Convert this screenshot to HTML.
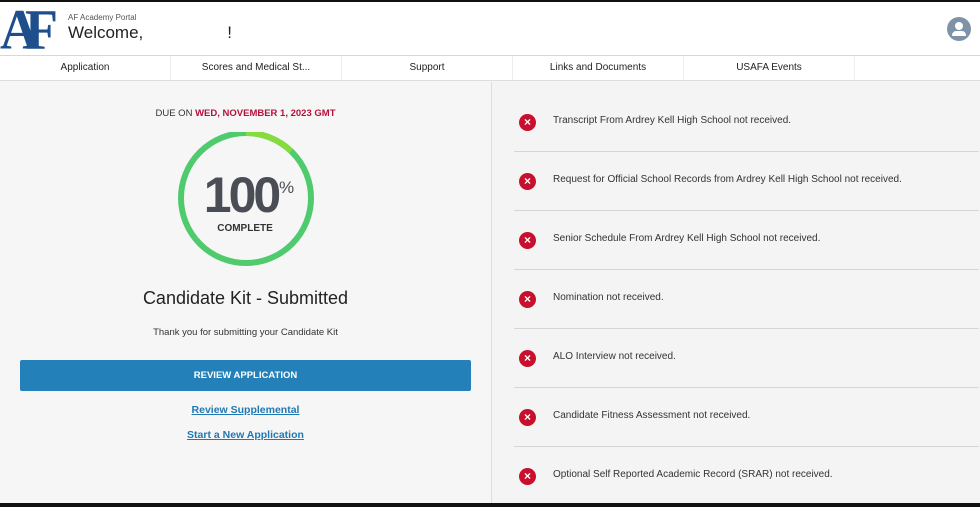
<!DOCTYPE html>
<html><head><style>
body{margin:0;width:980px;height:507px;background:#111;font-family:"Liberation Sans",sans-serif;overflow:hidden;position:relative}
.page{position:absolute;left:0;top:2px;width:980px;height:501px;background:#f5f5f5;overflow:hidden}
.hdr{position:absolute;left:0;top:0;width:980px;height:53px;background:#fff;border-bottom:1px solid #d8d8d8}
.nav{position:absolute;left:0;top:54px;width:980px;height:24px;background:#fff;border-bottom:1px solid #ddd}
.nav div{position:absolute;top:0;height:24px;line-height:24px;text-align:center;font-size:10px;color:#222;border-right:1px solid #eee}
.left{position:absolute;left:0;top:80px;width:491px;height:425px;background:#f6f6f6;border-right:1px solid #ddd}
.right{position:absolute;left:492px;top:80px;width:488px;height:425px;background:#f4f4f4}
.row{position:absolute;left:22px;width:465px;height:58px;border-bottom:1px solid #d6d6d6}
.row .x{position:absolute;left:5px;top:21px;width:17px;height:17px;border-radius:50%;background:#c8102e;color:#fff;font-size:12px;font-weight:bold;line-height:17px;text-align:center}
.row span{position:absolute;left:39px;top:22px;font-size:10px;color:#333}
a{color:#1f78b4;font-size:10.5px;font-weight:bold;text-decoration:underline;position:absolute;left:0;width:491px;text-align:center}
</style></head><body>
<div class="page">
<div class="hdr">
<div style="position:absolute;left:0;top:-4px;font-family:'Liberation Serif',serif;font-weight:bold;font-size:54px;line-height:60px;color:#1e4f8c;letter-spacing:-14px;transform:scaleY(1.05);transform-origin:top left">AF</div>
<div style="position:absolute;left:68px;top:11px;font-size:8px;color:#555">AF Academy Portal</div>
<div style="position:absolute;left:68px;top:21px;font-size:17px;color:#222">Welcome,<span style="margin-left:84px">!</span></div>
<div style="position:absolute;left:947px;top:15px;width:24px;height:24px;border-radius:50%;background:#7f93a8;overflow:hidden">
<div style="position:absolute;left:8px;top:5px;width:8px;height:8px;border-radius:50%;background:#fff"></div>
<div style="position:absolute;left:5px;top:14px;width:14px;height:5px;border-radius:5px 5px 1px 1px;background:#fff"></div></div>
</div>
<div class="nav">
<div style="left:0;width:170px">Application</div>
<div style="left:171px;width:170px">Scores and Medical St...</div>
<div style="left:342px;width:170px">Support</div>
<div style="left:513px;width:170px">Links and Documents</div>
<div style="left:684px;width:170px">USAFA Events</div>
</div>
<div class="left">
<div style="position:absolute;top:26px;width:491px;text-align:center;font-size:9.5px;color:#333">DUE ON <b style="color:#b3123a">WED, NOVEMBER 1, 2023 GMT</b></div>
<svg style="position:absolute;left:176px;top:50px" width="140" height="140"><circle cx="70" cy="66" r="65" fill="none" stroke="#4fcb6e" stroke-width="6"/><path d="M70 1 A65 65 0 0 1 115 19" fill="none" stroke="#86dc3d" stroke-width="6"/></svg>
<div style="position:absolute;left:186px;top:84px;width:110px;text-align:center;font-size:50px;font-weight:bold;color:#4a4d55;letter-spacing:-3px">100</div>
<div style="position:absolute;left:279px;top:96px;font-size:17px;color:#4a4d55">%</div>
<div style="position:absolute;left:190px;top:141px;width:110px;text-align:center;font-size:10px;font-weight:bold;color:#333">COMPLETE</div>
<div style="position:absolute;top:206px;width:491px;text-align:center;font-size:18px;color:#222">Candidate Kit - Submitted</div>
<div style="position:absolute;top:245px;width:491px;text-align:center;font-size:9.5px;color:#333">Thank you for submitting your Candidate Kit</div>
<div style="position:absolute;left:20px;top:278px;width:451px;height:31px;background:#2380b9;border-radius:2px;color:#fff;font-size:9.5px;font-weight:bold;text-align:center;line-height:31px">REVIEW APPLICATION</div>
<a style="top:322px">Review Supplemental</a>
<a style="top:347px">Start a New Application</a>
</div>
<div class="right">
<div class="row" style="top:11px"><div class="x">×</div><span>Transcript From Ardrey Kell High School not received.</span></div>
<div class="row" style="top:70px"><div class="x">×</div><span>Request for Official School Records from Ardrey Kell High School not received.</span></div>
<div class="row" style="top:129px"><div class="x">×</div><span>Senior Schedule From Ardrey Kell High School not received.</span></div>
<div class="row" style="top:188px"><div class="x">×</div><span>Nomination not received.</span></div>
<div class="row" style="top:247px"><div class="x">×</div><span>ALO Interview not received.</span></div>
<div class="row" style="top:306px"><div class="x">×</div><span>Candidate Fitness Assessment not received.</span></div>
<div class="row" style="top:365px;border:none"><div class="x">×</div><span>Optional Self Reported Academic Record (SRAR) not received.</span></div>
</div>
</div>
</body></html>
